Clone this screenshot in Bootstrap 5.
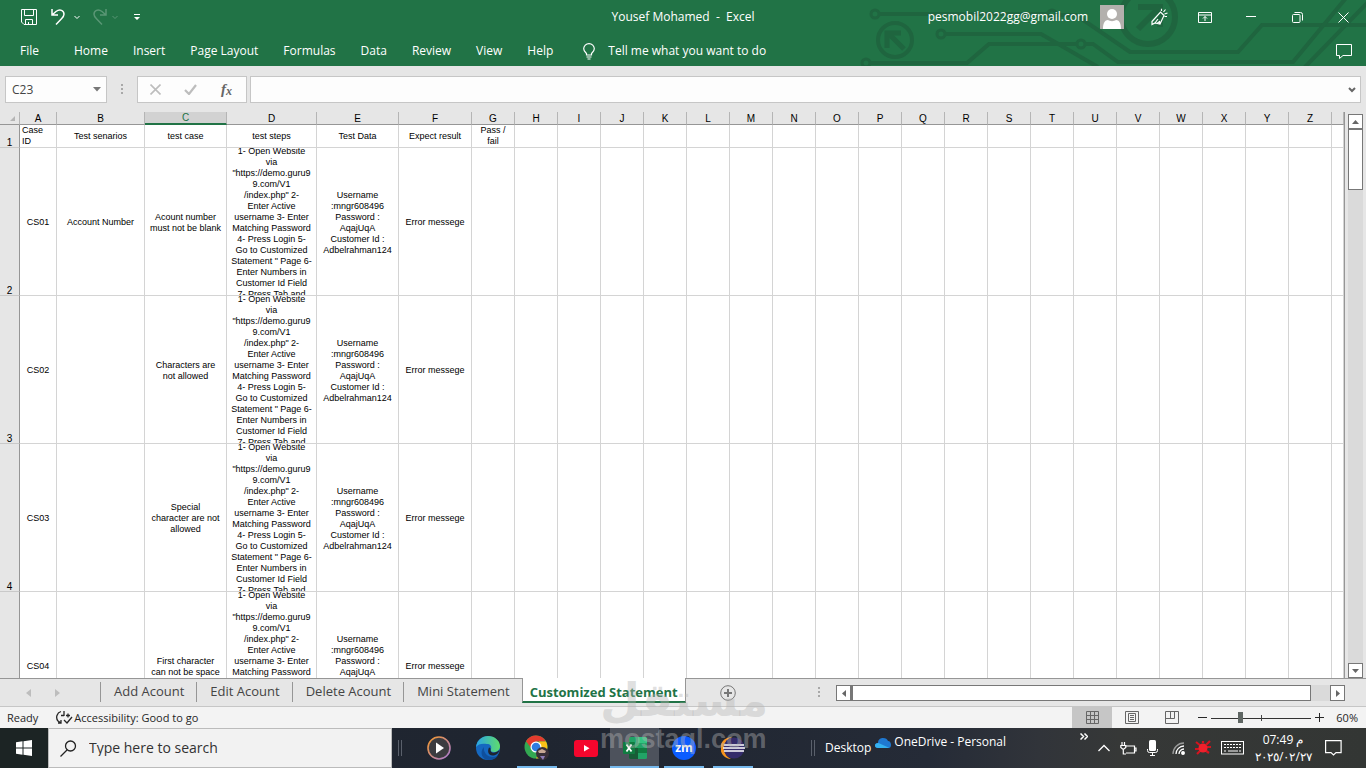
<!DOCTYPE html>
<html lang="en">
<head>
<meta charset="utf-8">
<meta name="viewport" content="width=device-width, initial-scale=1">
<title>Yousef Mohamed - Excel</title>
<link href="https://cdn.jsdelivr.net/npm/bootstrap@5.3.0/dist/css/bootstrap.min.css" rel="stylesheet">
<style>
  body { font-family: "Open Sans", "Noto Sans", sans-serif; font-size: 12px; line-height: 16px; color: #262626; background: #e6e6e6; }
  button { font: inherit; color: inherit; background: none; border: 0; padding: 0; }
  svg { display: block; flex: none; }
  .ln { fill: none; stroke: currentColor; }

  /* title bar and ribbon tabs */
  .app-head { background: #217346; color: #fff; height: 66px; }
  .circuit { position: absolute; top: 0; right: 0; color: #1f653f; }
  .title-row { display: grid; grid-template-columns: 1fr auto 1fr; height: 34px; }
  .quick { padding-left: 20px; }
  .faded { opacity: .25; }
  .win-btn { width: 46px; height: 32px; display: flex; align-items: center; justify-content: center; }
  .avatar { margin-right: 12px; }
  .ribbon { height: 32px; padding: 2px 14px 0 20px; gap: 25px; }
  .ribbon a { color: #fff; }
  .ribbon a.first { margin-right: 10px; }
  .tell { gap: 13px; margin-left: 5px; }

  /* formula bar */
  .formula { height: 46px; padding: 10px 5px 10px 5px; gap: 3px; }
  .fbox { background: #fdfdfd; border: 1px solid #c6c6c6; height: 27px; }
  .name-box { width: 102px; padding: 0 5px 0 6px; }
  .name-box input { width: 60px; border: 0; background: none; padding: 0; color: #444; }
  .fx-tools { width: 110px; color: #bdbdbd; }
  .fx-text { border: 0; background: none; outline: 0; min-width: 0; }
  .dots { width: 2px; height: 11px; background: repeating-linear-gradient(#a8a8a8 0 2px, transparent 2px 4px); }
  .formula .dots { margin: 0 11px; }

  /* grid */
  .sheet-area { min-height: 0; border-bottom: 1px solid #969696; }
  .sheet-wrap { overflow: hidden; min-width: 0; border-right: 1px solid #969696; }
  .grid-table { table-layout: fixed; border-collapse: separate; border-spacing: 0; width: 100%; font-family: "Liberation Sans", Arial, sans-serif; font-size: 9px; line-height: 11px; color: #000; background: #fff; }
  .grid-table th, .grid-table td { padding: 0; border: 0 solid #d4d4d4; text-align: center; font-weight: 400; vertical-align: middle; overflow: hidden; white-space: nowrap; }
  .grid-table td { border-width: 0 1px 1px 0; }
  .grid-table thead th { height: 13px; background: #e6e6e6; border-right: 1px solid #b5b5b5; border-bottom: 1px solid #969696; font-size: 10px; }
  .grid-table thead th.picked { background: #d2d2d2; border-bottom: 2px solid #217346; color: #217346; }
  .grid-table tbody th { background: #e6e6e6; border-right: 1px solid #969696; border-bottom: 1px solid #c9c9c9; vertical-align: bottom; font-size: 10px; line-height: 9px; }
  .r-head td, .r-head th { height: 23px; }
  .r-head td:nth-child(2) { text-align: left; padding-left: 2px; }
  .r-data td, .r-data th { height: 148px; }
  .fit { height: 147px; padding-top: 2px; overflow: hidden; display: flex; align-items: center; justify-content: center; }
  .c-row { width: 20px; } .c-a { width: 37px; } .c-b { width: 88px; } .c-c { width: 82px; } .c-d { width: 90px; } .c-f { width: 73px; } .c-n { width: 43px; }
  .vbar { width: 21px; padding: 2px 3px 0 3px; }
  .sb { background: #fff; border: 1px solid #777; display: flex; align-items: center; justify-content: center; color: #666; }
  .vbar .sb { width: 15px; height: 15px; }
  .vbar .v-thumb { height: 62px; margin-top: -1px; border-top-width: 2px; }
  .vbar .track { background: #dadada; }

  /* sheet tabs */
  .tabs-row { height: 28px; border-bottom: 1px solid #c6c6c6; }
  .tab-nav { width: 100px; padding-left: 26px; gap: 24px; color: #bdbdbd; }
  .sheet-tab { font-size: 13px; line-height: 18px; height: 20px; margin-top: 3px; padding: 0 12px 2px 13px; color: #444; border-left: 1px solid #969696; }
  .sheet-tab.current { background: #fff; color: #217346; font-weight: 700; height: 25px; margin-top: -1px; padding: 5px 7px 0 7px; border-bottom: 2px solid #217346; border-right: 1px solid #969696; }
  .add-sheet { margin-left: 34px; }
  .hbar { width: 509px; height: 16px; margin: 6px 21px 0 0; background: #dadada; }
  .hbar .sb { width: 15px; height: 16px; }
  .hbar .h-thumb { width: 460px; border-left-width: 2px; }

  /* status bar */
  .status { height: 21px; background: #f3f3f3; font-size: 11px; color: #262626; padding: 0 8px 0 7px; }
  .access { margin-left: 18px; gap: 1px; }
  .view-btn { width: 40px; height: 21px; display: flex; align-items: center; justify-content: center; color: #666; }
  .view-btn.on { background: #c6c6c6; }
  .zoom-out { margin-left: 6px; }
  .zoom-range { appearance: none; width: 100px; height: 12px; margin: 0 4px; background: linear-gradient(#444, #444) 50px 3px / 1px 6px no-repeat, linear-gradient(#333, #333) 0 6px / 100% 1px no-repeat; }
  .zoom-range::-webkit-slider-thumb { appearance: none; width: 5px; height: 11px; background: #5f6663; }

  /* taskbar */
  .taskbar { height: 40px; background: linear-gradient(90deg, #1e2329 0, #202630 48px, #1f2530 40%, #252b37 68%, #31343a 76%, #363837 82%, #333634 100%); color: #fff; }
  .start { width: 48px; height: 40px; background: #1c2424; }
  .search { width: 344px; height: 40px; background: #f2f2f2; border: 1px solid #bbb; color: #222; padding-left: 11px; }
  .search input { border: 0; background: none; outline: 0; padding: 0; font-size: 14px; color: #2b2b2b; width: 260px; }
  .search input::placeholder { color: #333; opacity: 1; }
  .grip { width: 4px; height: 16px; border-left: 1px solid #5a606b; border-right: 1px solid #5a606b; }
  .pins { margin-left: 6px; gap: 12px; }
  .links { margin-left: 54px; gap: 10px; }
  .task { width: 49px; height: 40px; display: flex; align-items: center; justify-content: center; border-bottom: 3px solid transparent; border-top: 3px solid transparent; }
  .task.open { background: linear-gradient(#76b9ed, #76b9ed) center bottom / 40px 2px no-repeat border-box; }
  .task.active { background: linear-gradient(#76b9ed, #76b9ed) center bottom / 100% 2px no-repeat border-box, #4d525c border-box; }
  .tray { gap: 10px; }
  .clock { width: 56px; line-height: 17px; white-space: nowrap; }
  .od { height: 28px; gap: 3px; margin-left: -6px; }

  /* watermark over the bottom bars */
  .wm { position: absolute; left: 600px; bottom: 14px; width: 166px; color: rgba(180,180,180,.42); pointer-events: none; text-align: center; z-index: 5; }
  .wm-ar { font: 700 46px/48px "DejaVu Sans", sans-serif; white-space: nowrap; }
  .wm-en { font: 700 27px/30px "Liberation Sans", Arial, sans-serif; }
</style>
</head>
<body class="vh-100 d-flex flex-column overflow-hidden position-relative">

<header class="app-head position-relative flex-shrink-0">
  <svg class="circuit ln" width="526" height="66" viewBox="840 0 526 66" stroke-width="4">
    <circle cx="875" cy="14" r="4" stroke-width="3"/><circle cx="1052" cy="14" r="4" stroke-width="3"/>
    <path d="M879 14H1048M1056 15H1076L1130 52H1238L1262 25H1366"/>
    <circle cx="941" cy="34" r="4" stroke-width="3"/><path d="M945 34H1041L1098 67"/>
    <circle cx="866" cy="63" r="4" stroke-width="3"/><circle cx="1081" cy="44" r="4" stroke-width="3"/>
    <path d="M870 63H967L989 44H1077M1085 44H1093L1118 62H1293L1346 -2M1304 68L1368 2"/>
    <circle cx="895" cy="40" r="17"/><path d="M904 49L888 33M887 48V33H901" stroke-width="5"/>
    <circle cx="1148" cy="17" r="27" stroke-width="6"/><path d="M1138 29L1158 9M1138 7H1160V27" stroke-width="6"/>
  </svg>
  <div class="title-row position-relative">
    <div class="quick d-flex align-items-center">
      <button aria-label="Save"><svg class="ln" width="18" height="18" viewBox="0 0 18 18"><path d="M1.500 1.500h15v15H4l-2.500-2.500zM4.500 1.500v6h9v-6M5.500 16.500v-5h7v5M8.500 14v2"/></svg></button>
      <button class="ms-2 ps-1" aria-label="Undo"><svg class="ln" width="16" height="18" viewBox="0 0 16 18" stroke-width="1.500"><path d="M2 1v6h6M2 7l4-3.500c4-3 8-1 8 2.800 0 2-1 3-2.500 4.500L6 16.500"/></svg></button>
      <svg class="ln ms-2" width="6" height="5" viewBox="0 0 6 5"><path d="M.5 1L3 3.500 5.500 1"/></svg>
      <button class="ms-2 ps-1 faded" aria-label="Redo"><svg class="ln" width="16" height="18" viewBox="0 0 16 18" stroke-width="1.500"><path d="M14 1v6H8M14 7l-4-3.500c-4-3-8-1-8 2.800 0 2 1 3 2.500 4.500L10 16.500"/></svg></button>
      <svg class="ln ms-1 faded" width="6" height="5" viewBox="0 0 6 5"><path d="M.5 1L3 3.500 5.500 1"/></svg>
      <button class="ms-3" aria-label="Customize"><svg width="6" height="7" viewBox="0 0 6 7" fill="#fff"><path d="M0 0h6v1H0zM0 3h6L3 6z"/></svg></button>
    </div>
    <div class="d-flex align-items-center">Yousef Mohamed&nbsp; -&nbsp; Excel</div>
    <div class="d-flex align-items-center justify-content-end">
      <span class="me-2 pe-1">pesmobil2022gg@gmail.com</span>
      <svg class="avatar" width="24" height="24" viewBox="0 0 24 24"><rect width="24" height="24" fill="#b3b0ad"/><circle cx="12" cy="9" r="5" fill="#fff"/><path d="M3 24c0-6 2-9 5-9 2 1.500 6 1.500 8 0 3 0 5 3 5 9z" fill="#fff"/></svg>
      <button class="win-btn" aria-label="Ink"><svg class="ln" width="17" height="18" viewBox="0 0 17 18" stroke-width="1.200"><path d="M1 13.500L9.500 4l3.500 3.500-4 8.500-5-1-3 1.500zM4 15l3-4M6 15.500l2.500-2 .5 2.500M10.500 3V.8M12.500 4l2-2.500M13.500 6l3-1M13.500 8.500h2.500"/></svg></button>
      <button class="win-btn" aria-label="Ribbon display"><svg class="ln" width="14" height="11" viewBox="0 0 14 11"><path d="M.5.5h13v10H.5zM.5 3h13M7 9V4.500M5 6.500l2-2 2 2"/></svg></button>
      <button class="win-btn" aria-label="Minimize"><svg class="ln" width="10" height="2" viewBox="0 0 10 2"><path d="M0 .5h10"/></svg></button>
      <button class="win-btn" aria-label="Restore"><svg class="ln" width="11" height="11" viewBox="0 0 11 11"><rect x=".5" y="2.500" width="7.500" height="8" rx="1"/><path d="M2.500.5H8.500q2 0 2 2V8.500"/></svg></button>
      <button class="win-btn" aria-label="Close"><svg class="ln" width="11" height="11" viewBox="0 0 11 11"><path d="M.5.5l10 10M10.500.5l-10 10"/></svg></button>
    </div>
  </div>
  <nav class="ribbon nav d-flex align-items-center position-relative flex-nowrap">
    <a class="text-decoration-none first" href="#">File</a><a class="text-decoration-none" href="#">Home</a><a class="text-decoration-none" href="#">Insert</a><a class="text-decoration-none" href="#">Page Layout</a><a class="text-decoration-none" href="#">Formulas</a><a class="text-decoration-none" href="#">Data</a><a class="text-decoration-none" href="#">Review</a><a class="text-decoration-none" href="#">View</a><a class="text-decoration-none" href="#">Help</a>
    <a class="text-decoration-none tell d-flex align-items-center" href="#"><svg class="ln" width="12" height="17" viewBox="0 0 12 17" stroke-width="1.200"><path d="M3.500 12V10.500C2 9 .7 8 .7 5.800a5.300 5.200 0 0 1 10.600 0C11.300 8 10 9 8.500 10.500V12zM3.500 14h5M4.500 16h3"/></svg>Tell me what you want to do</a>
    <button class="ms-auto" aria-label="Comments"><svg class="ln" width="16" height="15" viewBox="0 0 16 15"><path d="M.5.5h15v11H7L3.500 14.500V11.500H.5z"/></svg></button>
  </nav>
</header>

<div class="formula d-flex flex-shrink-0">
  <div class="fbox name-box d-flex align-items-center justify-content-between">
    <input value="C23" aria-label="Name box">
    <svg width="8" height="5" viewBox="0 0 8 5" fill="#777"><path d="M0 0h8L4 4.500z"/></svg>
  </div>
  <div class="dots align-self-center"></div>
  <div class="fbox fx-tools d-flex align-items-center justify-content-around">
    <button aria-label="Cancel"><svg class="ln" width="11" height="11" viewBox="0 0 11 11" stroke-width="1.600"><path d="M.5.5l10 10M10.500.5l-10 10"/></svg></button>
    <button aria-label="Enter"><svg class="ln" width="13" height="11" viewBox="0 0 13 11" stroke-width="2.200"><path d="M1 6l4 4 7-9"/></svg></button>
    <button aria-label="Insert function"><svg width="14" height="16" viewBox="0 0 14 16" fill="#666"><text x="1" y="12" font-family="Liberation Serif, serif" font-style="italic" font-weight="700" font-size="15">f</text><text x="6" y="13" font-family="Liberation Serif, serif" font-style="italic" font-weight="700" font-size="12">x</text></svg></button>
  </div>
  <div class="fbox flex-grow-1 d-flex align-items-center pe-1">
    <input class="fx-text flex-grow-1" aria-label="Formula">
    <svg class="ln" width="8" height="6" viewBox="0 0 8 6" stroke-width="2" color="#666"><path d="M1 1l3 3 3-3"/></svg>
  </div>
</div>

<main class="sheet-area d-flex flex-grow-1">
  <div class="sheet-wrap flex-grow-1">
    <table class="grid-table">
      <colgroup id="cols"><col class="c-row"><col class="c-a"><col class="c-b"><col class="c-c"><col class="c-d"><col class="c-c"><col class="c-f"></colgroup>
      <thead><tr id="letters"><th><svg class="ms-auto me-1" width="5" height="5" viewBox="0 0 5 5" fill="#b5b5b5"><path d="M5 0v5H0z"/></svg></th></tr></thead>
      <tbody id="rows">
        <tr class="r-head"><th>1</th><td>Case<br>ID</td><td>Test senarios</td><td>test case</td><td>test steps</td><td>Test Data</td><td>Expect result</td><td>Pass /<br>fail</td></tr>
      </tbody>
    </table>
  </div>
  <div class="vbar d-flex flex-column flex-shrink-0">
    <button class="sb" aria-label="Scroll up"><svg width="7" height="4" viewBox="0 0 7 4" fill="currentColor"><path d="M0 4l3.500-4L7 4z"/></svg></button>
    <div class="sb v-thumb"></div>
    <div class="track flex-grow-1"></div>
    <button class="sb" aria-label="Scroll down"><svg width="7" height="4" viewBox="0 0 7 4" fill="currentColor"><path d="M0 0l3.500 4L7 0z"/></svg></button>
  </div>
</main>

<div class="tabs-row d-flex flex-shrink-0 align-items-start">
  <div class="tab-nav d-flex align-items-center align-self-stretch">
    <svg width="5" height="8" viewBox="0 0 5 8" fill="currentColor"><path d="M5 0v8L0 4z"/></svg>
    <svg width="5" height="8" viewBox="0 0 5 8" fill="currentColor"><path d="M0 0v8l5-4z"/></svg>
  </div>
  <button class="sheet-tab">Add Acount</button><button class="sheet-tab">Edit Acount</button><button class="sheet-tab">Delete Acount</button><button class="sheet-tab">Mini Statement</button><button class="sheet-tab current">Customized Statement</button>
  <button class="add-sheet align-self-center" aria-label="New sheet"><svg class="ln" width="16" height="16" viewBox="0 0 16 16" color="#777"><circle cx="8" cy="8" r="7.300"/><path d="M8 4v8M4 8h8" stroke-width="2"/></svg></button>
  <div class="dots ms-auto me-3 align-self-center"></div>
  <div class="hbar d-flex">
    <button class="sb" aria-label="Scroll left"><svg width="4" height="7" viewBox="0 0 4 7" fill="currentColor"><path d="M4 0v7L0 3.500z"/></svg></button>
    <div class="sb h-thumb"></div>
    <button class="sb ms-auto" aria-label="Scroll right"><svg width="4" height="7" viewBox="0 0 4 7" fill="currentColor"><path d="M0 0v7l4-3.500z"/></svg></button>
  </div>
</div>

<footer class="status d-flex flex-shrink-0 align-items-center">
  <span>Ready</span>
  <span class="access d-flex align-items-center"><svg class="ln" width="17" height="15" viewBox="0 0 17 15" stroke-width="1.300"><path d="M5 1.500A6 6 0 0 0 2 11l3 2M2 13h3v-3M8 1v5M5 5.500h3M10 5.500h4M12 3.500v4M8 10l3 3 5-6"/></svg>Accessibility: Good to go</span>
  <button class="view-btn on ms-auto" aria-label="Normal"><svg class="ln" width="13" height="13" viewBox="0 0 13 13"><path d="M.5.5h12v12H.5zM.5 4.500h12M.5 8.500h12M4.500.5v12M8.500.5v12"/></svg></button>
  <button class="view-btn" aria-label="Page layout"><svg class="ln" width="14" height="13" viewBox="0 0 14 13"><path d="M.5.5h13v12H.5zM3.500 2.500h7v8h-7zM5 4.500h4M5 6.500h4M5 8.500h4"/></svg></button>
  <button class="view-btn" aria-label="Page break"><svg class="ln" width="14" height="13" viewBox="0 0 14 13"><path d="M.5.5h13v12H.5zM5.500.5v7M9.500.5v7M.5 7.500h9"/></svg></button>
  <button class="zoom-out" aria-label="Zoom out"><svg class="ln" width="9" height="9" viewBox="0 0 9 9"><path d="M0 4.500h9"/></svg></button>
  <input class="zoom-range" type="range" min="0" max="100" value="28" aria-label="Zoom">
  <button aria-label="Zoom in"><svg class="ln" width="9" height="9" viewBox="0 0 9 9"><path d="M0 4.500h9M4.500 0v9"/></svg></button>
  <span class="ms-2 ps-1">60%</span>
</footer>

<div class="taskbar d-flex flex-shrink-0 align-items-center">
  <button class="start d-flex align-items-center justify-content-center" aria-label="Start"><svg width="16" height="16" viewBox="0 0 16 16" fill="#fff"><path d="M0 2.200L6.500 1.300V7.500H0zM7.500 1.200L16 0v7.500H7.500zM0 8.500h6.500v6.200L0 13.800zM7.500 8.500H16V16l-8.500-1.200z"/></svg></button>
  <label class="search d-flex align-items-center"><svg class="ln" width="17" height="17" viewBox="0 0 17 17" stroke-width="1.300"><circle cx="10.500" cy="6" r="5"/><path d="M7 10L.5 16.500"/></svg><input class="ms-2 ps-1" placeholder="Type here to search" aria-label="Search"></label>
  <div class="pins d-flex align-items-center">
    <div class="grip"></div>
    <div class="d-flex">
      <button class="task" aria-label="Media player"><svg width="24" height="24" viewBox="0 0 24 24"><defs><linearGradient id="mp" x1="0" y1="0" x2="1" y2="1"><stop stop-color="#f79a2a"/><stop offset="1" stop-color="#a77bd8"/></linearGradient></defs><circle cx="12" cy="12" r="11" fill="#3c3c40" stroke="url(#mp)" stroke-width="1.600"/><path d="M9 6.500v11l8-5.500z" fill="#fff"/></svg></button>
      <button class="task" aria-label="Edge"><svg width="24" height="24" viewBox="0 0 24 24"><defs><linearGradient id="eg"><stop stop-color="#2aa4e6"/><stop offset="1" stop-color="#5fdc6c"/></linearGradient></defs><circle cx="12" cy="12" r="12" fill="#1568c0"/><path d="M0 11C1 4 6 0 12 0c7 0 12 5 12 10 0 4-3 6-6 6-3 0-4-1-3-3 1-3-1-5-4-5C6 7 2 8 0 11z" fill="url(#eg)"/><path d="M8 11c-1 5 3 10 9 10 2 0 4-1 5-2-1 3-5 5-9 5C6 24 3 16 8 11z" fill="#0f4f9c"/><path d="M14.500 14c0 3 4 4 9 0-1 4-4 5.500-7 5.500-4 0-5.500-4-3.500-8 1 0 2 1 1.500 2.500z" fill="#1f2530"/></svg></button>
      <button class="task open" aria-label="Chrome"><svg width="26" height="26" viewBox="0 0 26 26"><circle cx="12" cy="12" r="11.500" fill="#33a852"/><path d="M2 6.200A11.500 11.500 0 0 1 22 6.500H12L8 14z" fill="#e33b2e"/><path d="M22 6.500A11.500 11.500 0 0 1 12 23.500l5-9-2-8z" fill="#fbc116"/><circle cx="12" cy="12" r="5.500" fill="#fff"/><circle cx="12" cy="12" r="4.300" fill="#2f7de1"/><circle cx="18.500" cy="18.500" r="6.500" fill="#3a3038"/><path d="M14 16l4-2 4 2-1 2h-6z" fill="#c9a894"/><path d="M16 21h5l-2 4z" fill="#8e7cb8"/></svg></button>
      <button class="task" aria-label="YouTube"><svg width="24" height="24" viewBox="0 0 24 24"><rect y="4" width="24" height="17" rx="3" fill="#f5062d"/><path d="M10 9v6.500l5.500-3.200z" fill="#fff"/></svg></button>
      <button class="task open active" aria-label="Excel"><svg width="24" height="24" viewBox="0 0 24 24"><rect x="6" y="1" width="18" height="22" rx="1.500" fill="#21a366"/><path d="M15 1h7.500A1.500 1.500 0 0 1 24 2.500V7h-9z" fill="#33c481"/><path d="M6 12h9v11H7.500A1.500 1.500 0 0 1 6 21.500z" fill="#185c37"/><path d="M15 12h9v5h-9z" fill="#107c41"/><rect y="6" width="12" height="12" rx="1" fill="#107c41"/><path d="M3.500 8.500l5 7M8.500 8.500l-5 7" stroke="#fff" stroke-width="1.800"/></svg></button>
      <button class="task open" aria-label="Zoom"><svg width="24" height="24" viewBox="0 0 24 24"><circle cx="12" cy="12" r="12" fill="#0b5cff"/><text x="12" y="16" text-anchor="middle" font-family="Open Sans, sans-serif" font-weight="700" font-size="12" fill="#fff">zm</text></svg></button>
      <button class="task open" aria-label="Eclipse"><svg width="24" height="24" viewBox="0 0 24 24"><path d="M11 1A11 11 0 0 0 10 23 12 12 0 0 1 11 1z" fill="#f7941e"/><circle cx="13" cy="12" r="10.500" fill="#352c6b"/><path d="M3 9h20M2 12h22M3 15h20" stroke="#fff" stroke-width="1.500"/></svg></button>
    </div>
  </div>

  <div class="links d-flex align-items-center">
    <div class="grip"></div>
    <span>Desktop</span>
    <button class="od d-flex align-items-start"><svg class="mt-1" width="16" height="10" viewBox="0 0 16 10"><path d="M3 5C3 1 6 0 8 0c3 0 4 1 5 3 2 0 3 2 3 4 0 2-1 3-2 3H3C1 10 0 9 0 7.500S1 5 3 5z" fill="#1f78d1"/><path d="M3 10C1 10 0 9 0 7.500S1 5 3.500 5L14 9.800c-.5.200-1 .2-1 .2z" fill="#35b1f0"/></svg><span>OneDrive - Personal</span></button>
  </div>
  <div class="tray d-flex align-items-center ms-auto">
    <svg class="ln mb-4" width="8" height="7" viewBox="0 0 8 7" stroke-width="1.500"><path d="M.5.5l3 3-3 3M4.500.5l3 3-3 3"/></svg>
    <svg class="ln" width="12" height="8" viewBox="0 0 12 8" stroke-width="1.300"><path d="M.5 7L6 1.500 11.500 7"/></svg>
    <svg class="ln" width="17" height="13" viewBox="0 0 17 13" stroke-width="1.200"><path d="M5 4h9.500v7H6M14.500 6H16v3h-1.500M2 0v3M4.500 0v3M.8 3.500h5v2L4 7H2.500L.8 5.500zM3.300 7v5H6"/></svg>
    <svg width="11" height="16" viewBox="0 0 11 16" fill="#fff"><rect x="2" width="7" height="11" rx="1.500"/><path d="M.5 9v1.500q0 2 2 2h6q2 0 2-2V9" class="ln"/><path d="M5 12h1v3H5zM3 15h5v1H3z"/></svg>
    <svg class="ln ms-1" width="13" height="13" viewBox="0 0 13 13" stroke-width="1.300"><path d="M1 12A11 11 0 0 1 12 1" opacity=".5"/><path d="M4 12a8 8 0 0 1 8-8M7 12a5 5 0 0 1 5-5" /><circle cx="11" cy="11" r="1.300" fill="#fff"/></svg>
    <svg width="16" height="16" viewBox="0 0 16 16"><path d="M1 2l5 4M15 1l-4 4M2 14l4-4M14 13l-4-3M8 3V1M0 9h4M12 7h4" stroke="#d3141f" stroke-width="2.200"/><circle cx="8" cy="8" r="4.500" fill="#f0202c"/></svg>
    <svg class="ln" width="24" height="14" viewBox="0 0 24 14"><rect x=".5" y=".5" width="22" height="12.500"/><path d="M3 3.500h17M3 6.500h17" stroke-dasharray="2 1"/><path d="M3 10h2M7 10h10M18 10h2"/></svg>
    <div class="clock text-center">07:49 م<br>٢٠٢٥/٠٢/٢٧</div>
    <button class="ms-1 me-4" aria-label="Notifications"><svg class="ln" width="17" height="16" viewBox="0 0 17 16" stroke-width="1.200"><path d="M.6.6h15.500v12H11L8.500 15 6 12.600H.6z"/></svg></button>
  </div>
</div>

<div class="wm"><div class="wm-ar" lang="ar">مستقل</div><div class="wm-en">mostaql.com</div></div>

<script src="https://cdn.jsdelivr.net/npm/bootstrap@5.3.0/dist/js/bootstrap.bundle.min.js"></script>
<script>
  // column letters and widths; the last, unlabelled column takes the rest of the window
  const letters = 'ABCDEFGHIJKLMNOPQRSTUVWXYZ'.split('');
  document.getElementById('letters').insertAdjacentHTML('beforeend',
    letters.map(l => `<th${l === 'C' ? ' class="picked"' : ''}>${l}</th>`).join('') + '<th></th>');
  document.getElementById('cols').insertAdjacentHTML('beforeend', '<col class="c-n">'.repeat(20) + '<col>');

  const steps = '1- Open Website<br>via<br>"https://demo.guru9<br>9.com/V1<br>/index.php" 2-<br>Enter Active<br>username 3- Enter<br>Matching Password<br>4- Press Login 5-<br>Go to Customized<br>Statement " Page 6-<br>Enter Numbers in<br>Customer Id Field<br>7- Press Tab and';
  const data = 'Username<br>:mngr608496<br>Password :<br>AqajUqA<br>Customer Id :<br>Adbelrahman124';
  const cases = [
    ['CS01', 'Account Number', 'Acount number<br>must not be blank'],
    ['CS02', '', 'Characters are<br>not allowed'],
    ['CS03', '', 'Special<br>character are not<br>allowed'],
    ['CS04', '', 'First character<br>can not be space']
  ];
  const body = document.getElementById('rows');
  body.rows[0].insertAdjacentHTML('beforeend', '<td></td>'.repeat(20));
  cases.forEach((c, i) => {
    const cells = [...c, steps, data, 'Error messege'];
    body.insertAdjacentHTML('beforeend', `<tr class="r-data"><th>${i + 2}</th>` +
      cells.map(t => `<td><div class="fit"><span>${t}</span></div></td>`).join('') + '<td></td>'.repeat(21) + '</tr>');
  });
</script>
</body>
</html>
